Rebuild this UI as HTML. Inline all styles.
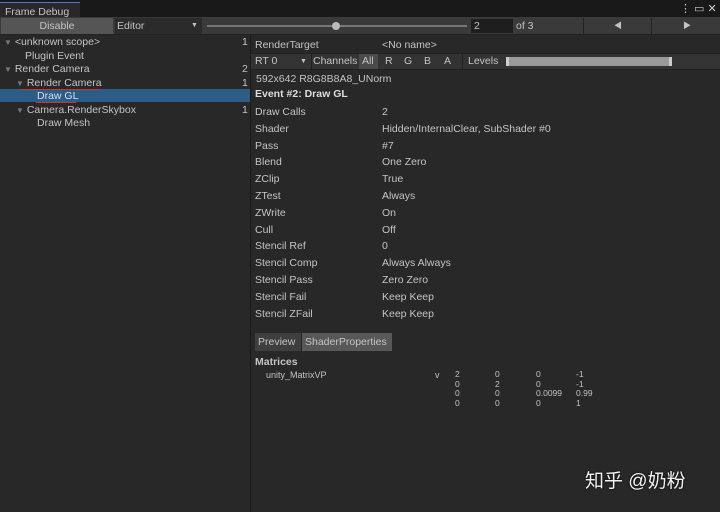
<!DOCTYPE html>
<html><head><style>
*{margin:0;padding:0;box-sizing:border-box}
body{width:720px;height:512px;background:#282828;font-family:"Liberation Sans","Noto Sans CJK SC",sans-serif;font-size:10.5px;color:#c4c4c4;position:relative;overflow:hidden}
.a{position:absolute;white-space:nowrap}
.t{color:#777;font-size:8px}
</style></head><body>
<div class="a" style="left:0;top:0;width:720px;height:17px;background:#191919"></div>
<div class="a" style="left:0;top:2px;width:80px;height:16px;background:#282828;border-top:1px solid #4a7bd0;padding:3px 0 0 5px">Frame Debug</div>
<div class="a" style="left:680px;top:2px;color:#ccc;font-size:11px">⋮ ▭ ✕</div>
<div class="a" style="left:0;top:17px;width:720px;height:18px;background:#3a3a3a;border-bottom:1px solid #222"></div>
<div class="a" style="left:1px;top:18px;width:112px;height:16px;background:#555;text-align:center;padding-top:2px">Disable</div>
<div class="a" style="left:115px;top:18px;width:87px;height:16px;background:#2b2b2b;padding:2px 0 0 2px">Editor<span style="position:absolute;left:76px;font-size:7px;top:4px">▼</span></div>
<div class="a" style="left:207px;top:25px;width:260px;height:2px;background:#777"></div>
<div class="a" style="left:332px;top:22px;width:8px;height:8px;border-radius:50%;background:#bbb"></div>
<div class="a" style="left:471px;top:19px;width:42px;height:14px;background:#1e1e1e;padding:1px 0 0 3px">2</div>
<div class="a" style="left:516px;top:20px">of 3</div>
<div class="a" style="left:583px;top:18px;width:1px;height:16px;background:#222"></div>
<div class="a" style="left:651px;top:18px;width:1px;height:16px;background:#222"></div>
<div class="a" style="left:614px;top:20px;font-size:8px">◀</div>
<div class="a" style="left:683px;top:20px;font-size:8px">▶</div>
<div class="a" style="left:250px;top:35px;width:1px;height:477px;background:#1a1a1a"></div>
<div class="a" style="left:0;top:89px;width:250px;height:13px;background:#2c5d87"></div>
<div class="a" style="left:4px;top:36px;line-height:13.5px">
<div><span class="t">▼</span> &lt;unknown scope&gt;</div><div style="padding-left:21px">Plugin Event</div><div><span class="t">▼</span> Render Camera</div>
<div style="padding-left:12px"><span class="t">▼</span> Render Camera</div><div style="padding-left:33px;color:#dde">Draw GL</div>
<div style="padding-left:12px"><span class="t">▼</span> Camera.RenderSkybox</div><div style="padding-left:33px">Draw Mesh</div></div>
<div class="a" style="left:242px;top:36px;line-height:13.5px"><div>1</div><div>&nbsp;</div><div>2</div><div>1</div><div>&nbsp;</div><div>1</div></div>
<div class="a" style="left:20px;top:89px;width:80px;height:1px;background:#c33"></div>
<div class="a" style="left:36px;top:102px;width:40px;height:1px;background:#c33"></div>
<div class="a" style="left:255px;top:39px">RenderTarget</div><div class="a" style="left:382px;top:39px">&lt;No name&gt;</div>
<div class="a" style="left:251px;top:53px;width:469px;height:17px;background:#333;border-top:1px solid #222;border-bottom:1px solid #222"></div>
<div class="a" style="left:255px;top:55px">RT 0</div><div class="a" style="left:300px;top:58px;font-size:7px">▼</div>
<div class="a" style="left:311px;top:54px;width:1px;height:15px;background:#222"></div>
<div class="a" style="left:313px;top:55px">Channels</div>
<div class="a" style="left:359px;top:54px;width:19px;height:15px;background:#4a4a4a"></div>
<div class="a" style="left:362px;top:55px">All</div><div class="a" style="left:385px;top:55px">R</div><div class="a" style="left:404px;top:55px">G</div><div class="a" style="left:424px;top:55px">B</div><div class="a" style="left:444px;top:55px">A</div>
<div class="a" style="left:462px;top:54px;width:1px;height:15px;background:#222"></div>
<div class="a" style="left:468px;top:55px">Levels</div>
<div class="a" style="left:506px;top:57px;width:166px;height:9px;background:#9a9a9a;border-left:3px solid #ccc;border-right:3px solid #ccc"></div>
<div class="a" style="left:256px;top:73px">592x642 R8G8B8A8_UNorm</div>
<div class="a" style="left:255px;top:88px;font-weight:bold;color:#ddd">Event #2: Draw GL</div>
<div class="a" style="left:255px;top:104px;line-height:16.8px"><div>Draw Calls</div><div>Shader</div><div>Pass</div><div>Blend</div><div>ZClip</div><div>ZTest</div><div>ZWrite</div><div>Cull</div><div>Stencil Ref</div><div>Stencil Comp</div><div>Stencil Pass</div><div>Stencil Fail</div><div>Stencil ZFail</div></div>
<div class="a" style="left:382px;top:104px;line-height:16.8px"><div>2</div><div>Hidden/InternalClear, SubShader #0</div><div>#7</div><div>One Zero</div><div>True</div><div>Always</div><div>On</div><div>Off</div><div>0</div><div>Always Always</div><div>Zero Zero</div><div>Keep Keep</div><div>Keep Keep</div></div>
<div class="a" style="left:255px;top:333px;width:46px;height:18px;background:#3f3f3f;padding:3px 0 0 3px">Preview</div>
<div class="a" style="left:302px;top:333px;width:90px;height:18px;background:#585858;padding:3px 0 0 3px">ShaderProperties</div>
<div class="a" style="left:255px;top:356px;font-weight:bold">Matrices</div>
<div class="a" style="left:266px;top:370px;font-size:9px">unity_MatrixVP</div>
<div class="a" style="left:435px;top:370px;font-size:9px">v</div>
<div class="a" style="left:455px;top:370px;font-size:8.5px;line-height:9.5px"><div>2</div><div>0</div><div>0</div><div>0</div></div>
<div class="a" style="left:495px;top:370px;font-size:8.5px;line-height:9.5px"><div>0</div><div>2</div><div>0</div><div>0</div></div>
<div class="a" style="left:536px;top:370px;font-size:8.5px;line-height:9.5px"><div>0</div><div>0</div><div>0.0099</div><div>0</div></div>
<div class="a" style="left:576px;top:370px;font-size:8.5px;line-height:9.5px"><div>-1</div><div>-1</div><div>0.99</div><div>1</div></div>
<div class="a" style="left:585px;top:466px;font-size:19px;color:#f2f2f2;text-shadow:0 0 2px #000">知乎 @奶粉</div>
</body></html>
